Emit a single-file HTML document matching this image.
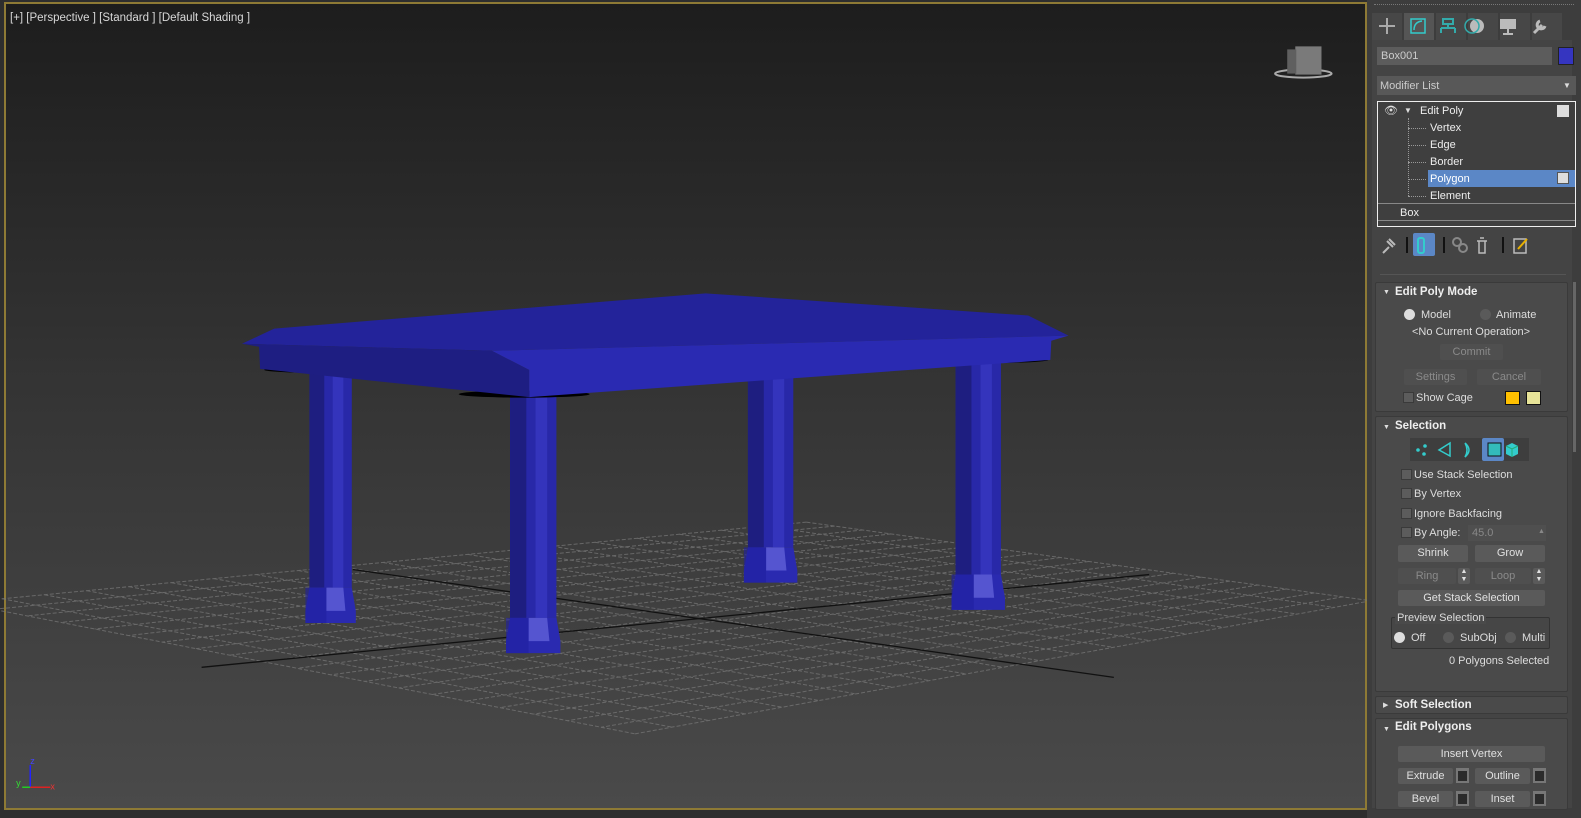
<!DOCTYPE html>
<html><head><meta charset="utf-8"><style>
*{box-sizing:border-box;margin:0;padding:0}
body{width:1581px;height:818px;background:#444;overflow:hidden;font-family:"Liberation Sans",sans-serif;font-size:11px;color:#ddd;position:relative}
.a{position:absolute}
.t{position:absolute;white-space:nowrap;line-height:12px}
.btn{position:absolute;background:#5a5a5a;border-radius:2px;text-align:center;line-height:16px;color:#e0e0e0}
.dis{color:#8a8a8a;background:#4f4f4f}
.cb{position:absolute;width:11px;height:11px;background:#5c5c5c;border:1px solid #3a3a3a}
.rad{position:absolute;width:11px;height:11px;border-radius:50%;background:#5a5a5a}
.ro{position:absolute;left:1375px;width:193px;background:#4a4a4a;border:1px solid #3a3a3a;border-radius:2px}
.ttl{position:absolute;font-weight:bold;font-size:11.5px;color:#eee}
.sq{position:absolute;width:13px;height:15px;background:#2b2b2b;border:2px solid #777;border-top-width:3px}
</style></head><body>
<svg class="a" style="left:0;top:0" width="1368" height="818" viewBox="0 0 1368 818">
<defs><linearGradient id="bg" x1="0" y1="0" x2="0" y2="1"><stop offset="0" stop-color="#1d1d1d"/><stop offset="0.45" stop-color="#333"/><stop offset="1" stop-color="#4a4a4a"/></linearGradient></defs>
<rect width="1368" height="818" fill="#2e2e2e"/>
<rect x="5" y="3" width="1361" height="806" fill="url(#bg)" stroke="#8e7a35" stroke-width="2"/>
<text x="10" y="21" fill="#d8d8d8" font-size="11.5" font-family="Liberation Sans">[+] [Perspective ] [Standard ] [Default Shading ]</text>
<g transform="scale(1.008)">
<g id="grid" stroke="#7a7a7a" stroke-width="1" stroke-dasharray="4 2" opacity="0.7"></g>
<line x1="200" y1="662" x2="1140" y2="570" stroke="#111" stroke-width="1.3"/>
<line x1="350" y1="565" x2="1105" y2="672" stroke="#111" stroke-width="1.3"/>
<g id="legs"></g>
<ellipse cx="330" cy="367" rx="68" ry="3" fill="#000"/>
<ellipse cx="520" cy="391" rx="65" ry="3.5" fill="#000"/>
<ellipse cx="990" cy="357" rx="50" ry="3" fill="#000"/>
<polygon points="240,341 272,326 700,291 1020,313 1060,333 488,348" fill="#23239a"/>
<polygon points="240,341 488,348 525,367 525,394 258,366 257,344" fill="#1e1e82"/>
<polygon points="488,348 1060,333 1043,338 1042,357 525,394 525,367" fill="#2a2ab2"/>
<ellipse cx="1293" cy="73" rx="28" ry="4" fill="none" stroke="#aaa" stroke-width="2"/>
<rect x="1285" y="46" width="26" height="28" fill="#7a7a7a"/>
<rect x="1277" y="49" width="9" height="24" fill="#5f5f5f"/>
<line x1="30" y1="759" x2="30" y2="781" stroke="#22f" stroke-width="1.5"/>
<line x1="30" y1="781" x2="50" y2="781" stroke="#d22" stroke-width="1.5"/>
<line x1="22" y1="781" x2="30" y2="781" stroke="#2c2" stroke-width="1.5"/>
<text x="30" y="758" fill="#44f" font-size="9">z</text><text x="50" y="783" fill="#e33" font-size="9">x</text><text x="16" y="780" fill="#3d3" font-size="9">y</text>
</g>
</svg>
<div class="a" style="left:1367px;top:0;width:214px;height:818px;background:#3d3d3d"></div>
<div class="a" style="left:1372px;top:40px;width:200px;height:768px;background:#444"></div>
<div class="a" style="left:1374px;top:4px;width:200px;height:2px;border-top:1px dotted #777"></div>
<div class="a" style="left:1372px;top:13px;width:30px;height:27px;background:#474747"></div>
<div class="a" style="left:1404px;top:13px;width:30px;height:27px;background:#555"></div>
<div class="a" style="left:1436px;top:13px;width:30px;height:27px;background:#474747"></div>
<div class="a" style="left:1468px;top:13px;width:30px;height:27px;background:#474747"></div>
<div class="a" style="left:1500px;top:13px;width:30px;height:27px;background:#474747"></div>
<div class="a" style="left:1532px;top:13px;width:30px;height:27px;background:#474747"></div>
<svg class="a" style="left:1372px;top:13px" width="192" height="27">
<path d="M15 5v16M7 13h16" stroke="#aaa" stroke-width="2"/>
<rect x="39" y="6" width="14" height="14" fill="none" stroke="#3cc" stroke-width="1.5"/><path d="M42 17q0-8 8-9" stroke="#3cc" fill="none" stroke-width="1.5"/>
<path d="M71 6h10v5h-10zM76 11v4M69 15h14M69 15v5M83 15v5" stroke="#3aa" fill="none" stroke-width="2"/>
<circle cx="105" cy="13" r="7" fill="#bbb"/><circle cx="100" cy="13" r="7" fill="none" stroke="#3aa" stroke-width="1.5"/>
<rect x="128" y="6" width="16" height="10" fill="#bbb"/><path d="M136 16v4M131 21h10" stroke="#bbb" stroke-width="2"/>
<path d="M162 20l8-8M168 8a4 4 0 1 0 5 5" stroke="#bbb" stroke-width="3" fill="none"/>
</svg>
<div class="a" style="left:1377px;top:47px;width:175px;height:18px;background:#5c5c5c"></div><div class="t" style="left:1381px;top:50px;color:#ccc">Box001</div>
<div class="a" style="left:1558px;top:47px;width:16px;height:18px;background:#3535c0;border:1px solid #222"></div>
<div class="a" style="left:1377px;top:76px;width:199px;height:19px;background:#585858"></div><div class="t" style="left:1380px;top:80px;color:#ccc">Modifier List</div><div class="t" style="left:1563px;top:80px;font-size:8px">▼</div>
<div class="a" style="left:1377px;top:101px;width:199px;height:126px;background:#3f3f3f;border:1px solid #eee"></div>
<div class="a" style="left:1428px;top:170px;width:147px;height:17px;background:#5b87c6"></div>
<div class="a" style="left:1408px;top:118px;width:1px;height:78px;border-left:1px dotted #999"></div>
<div class="a" style="left:1408px;top:128px;width:18px;border-top:1px dotted #999"></div>
<div class="a" style="left:1408px;top:145px;width:18px;border-top:1px dotted #999"></div>
<div class="a" style="left:1408px;top:162px;width:18px;border-top:1px dotted #999"></div>
<div class="a" style="left:1408px;top:179px;width:18px;border-top:1px dotted #999"></div>
<div class="a" style="left:1408px;top:196px;width:18px;border-top:1px dotted #999"></div>
<div class="t" style="left:1384px;top:105px;color:#ddd">👁</div><div class="t" style="left:1404px;top:105px;font-size:8px">▼</div>
<div class="t" style="left:1420px;top:105px;color:#eee">Edit Poly</div>
<div class="t" style="left:1430px;top:122px;color:#eee">Vertex</div>
<div class="t" style="left:1430px;top:139px;color:#eee">Edge</div>
<div class="t" style="left:1430px;top:156px;color:#eee">Border</div>
<div class="t" style="left:1430px;top:173px;color:#fff">Polygon</div>
<div class="t" style="left:1430px;top:190px;color:#eee">Element</div>
<div class="a" style="left:1378px;top:203px;width:197px;height:1px;background:#888"></div>
<div class="t" style="left:1400px;top:207px;color:#eee">Box</div>
<div class="a" style="left:1378px;top:220px;width:197px;height:1px;background:#888"></div>
<div class="a" style="left:1557px;top:105px;width:12px;height:12px;background:#ddd"></div>
<div class="a" style="left:1557px;top:172px;width:12px;height:12px;background:#ddd;border:1px solid #555"></div>
<div class="a" style="left:1413px;top:233px;width:22px;height:23px;background:#5b87c6;border-radius:2px"></div>
<svg class="a" style="left:1380px;top:233px" width="160" height="24">
<path d="M3 20l6-6M7 8l6 6M9 6l6 6" stroke="#bbb" stroke-width="2"/>
<line x1="27" y1="4" x2="27" y2="20" stroke="#111" stroke-width="2"/>
<rect x="38" y="5" width="6" height="15" rx="2" fill="none" stroke="#3cc" stroke-width="2"/>
<line x1="64" y1="4" x2="64" y2="20" stroke="#111" stroke-width="2"/>
<circle cx="77" cy="9" r="4" fill="none" stroke="#888" stroke-width="2"/><circle cx="83" cy="15" r="4" fill="none" stroke="#888" stroke-width="2"/>
<path d="M97 8h10M99 8v12h6v-12M100 5h4" stroke="#bbb" stroke-width="1.5" fill="none"/>
<line x1="123" y1="4" x2="123" y2="20" stroke="#111" stroke-width="2"/>
<rect x="134" y="6" width="12" height="14" fill="none" stroke="#bbb" stroke-width="1.5"/><path d="M138 16l9-10" stroke="#e8b000" stroke-width="2"/>
</svg>
<div class="a" style="left:1380px;top:274px;width:186px;height:1px;background:#555"></div>
<div class="ro" style="top:282px;height:130px"></div>
<div class="t" style="left:1383px;top:287px;font-size:7px">▼</div><div class="ttl" style="left:1395px;top:286px">Edit Poly Mode</div>
<div class="rad" style="left:1404px;top:309px;background:#ddd"></div><div class="t" style="left:1421px;top:309px">Model</div>
<div class="rad" style="left:1480px;top:309px"></div><div class="t" style="left:1496px;top:309px">Animate</div>
<div class="t" style="left:1412px;top:326px">&lt;No Current Operation&gt;</div>
<div class="btn dis" style="left:1440px;top:344px;width:63px;height:16px">Commit</div>
<div class="btn dis" style="left:1404px;top:369px;width:63px;height:16px">Settings</div>
<div class="btn dis" style="left:1477px;top:369px;width:64px;height:16px">Cancel</div>
<div class="cb" style="left:1403px;top:392px"></div><div class="t" style="left:1416px;top:392px">Show Cage</div>
<div class="a" style="left:1505px;top:391px;width:15px;height:14px;background:#ffc000;border:1px solid #111"></div>
<div class="a" style="left:1526px;top:391px;width:15px;height:14px;background:#e8e498;border:1px solid #111"></div>
<div class="ro" style="top:416px;height:276px"></div>
<div class="t" style="left:1383px;top:422px;font-size:7px">▼</div><div class="ttl" style="left:1395px;top:420px">Selection</div>
<div class="a" style="left:1410px;top:438px;width:119px;height:23px;background:#3e3e3e"></div>
<div class="a" style="left:1482px;top:438px;width:22px;height:23px;background:#5b87c6;border-radius:2px"></div>
<svg class="a" style="left:1410px;top:438px" width="120" height="23">
<circle cx="8" cy="12" r="1.8" fill="#3cc"/><circle cx="15" cy="8" r="1.8" fill="#3cc"/><circle cx="14" cy="16" r="1.8" fill="#3cc"/>
<path d="M40 5l-11 7 11 6z" fill="none" stroke="#3cc" stroke-width="1.5"/>
<path d="M55 5q8 7 0 14q4-7 0-14" fill="none" stroke="#3cc" stroke-width="1.5"/>
<rect x="78" y="5" width="13" height="13" fill="#3bb" stroke="#111"/>
<path d="M96 8l6-3 6 3v8l-6 3-6-3z" fill="#3cc"/><path d="M96 8l6 3 6-3M102 11v8" stroke="#2a7" fill="none"/>
</svg>
<div class="cb" style="left:1401px;top:469px"></div><div class="t" style="left:1414px;top:469px">Use Stack Selection</div>
<div class="cb" style="left:1401px;top:488px"></div><div class="t" style="left:1414px;top:488px">By Vertex</div>
<div class="cb" style="left:1401px;top:508px"></div><div class="t" style="left:1414px;top:508px">Ignore Backfacing</div>
<div class="cb" style="left:1401px;top:527px"></div><div class="t" style="left:1414px;top:527px">By Angle:</div>
<div class="a" style="left:1468px;top:525px;width:78px;height:16px;background:#4f4f4f"></div><div class="t" style="left:1472px;top:527px;color:#888">45.0</div><div class="t" style="left:1538px;top:526px;font-size:7px;color:#888">▲</div>
<div class="btn" style="left:1398px;top:545px;width:70px;height:17px">Shrink</div>
<div class="btn" style="left:1475px;top:545px;width:70px;height:17px">Grow</div>
<div class="btn dis" style="left:1398px;top:568px;width:58px;height:16px">Ring</div>
<div class="btn" style="left:1458px;top:568px;width:12px;height:16px;font-size:7px;line-height:8px">▲<br>▼</div>
<div class="btn dis" style="left:1475px;top:568px;width:56px;height:16px">Loop</div>
<div class="btn" style="left:1533px;top:568px;width:12px;height:16px;font-size:7px;line-height:8px">▲<br>▼</div>
<div class="btn" style="left:1398px;top:590px;width:147px;height:16px">Get Stack Selection</div>
<div class="a" style="left:1391px;top:617px;width:159px;height:32px;border:1px solid #333;border-radius:2px;background:#464646"></div>
<div class="t" style="left:1395px;top:612px;background:#4a4a4a;padding:0 2px">Preview Selection</div>
<div class="rad" style="left:1394px;top:632px;background:#ddd"></div><div class="t" style="left:1411px;top:632px">Off</div>
<div class="rad" style="left:1443px;top:632px"></div><div class="t" style="left:1460px;top:632px">SubObj</div>
<div class="rad" style="left:1505px;top:632px"></div><div class="t" style="left:1522px;top:632px">Multi</div>
<div class="t" style="left:1449px;top:655px">0 Polygons Selected</div>
<div class="ro" style="top:696px;height:18px"></div>
<div class="t" style="left:1383px;top:700px;font-size:7px">▶</div><div class="ttl" style="left:1395px;top:699px">Soft Selection</div>
<div class="ro" style="top:718px;height:92px"></div>
<div class="t" style="left:1383px;top:724px;font-size:7px">▼</div><div class="ttl" style="left:1395px;top:721px">Edit Polygons</div>
<div class="btn" style="left:1398px;top:746px;width:147px;height:16px">Insert Vertex</div>
<div class="btn" style="left:1398px;top:768px;width:55px;height:16px">Extrude</div><div class="sq" style="left:1456px;top:768px"></div>
<div class="btn" style="left:1475px;top:768px;width:55px;height:16px">Outline</div><div class="sq" style="left:1533px;top:768px"></div>
<div class="btn" style="left:1398px;top:791px;width:55px;height:16px">Bevel</div><div class="sq" style="left:1456px;top:791px"></div>
<div class="btn" style="left:1475px;top:791px;width:55px;height:16px">Inset</div><div class="sq" style="left:1533px;top:791px"></div>
<div class="a" style="left:1573px;top:282px;width:3px;height:170px;background:#666"></div>
<div class="a" style="left:1367px;top:810px;width:214px;height:8px;background:#3d3d3d"></div>
<script>
var ns="http://www.w3.org/2000/svg";
var g=document.getElementById("grid");
function L(a,b){var l=document.createElementNS(ns,"line");l.setAttribute("x1",a[0]);l.setAttribute("y1",a[1]);l.setAttribute("x2",b[0]);l.setAttribute("y2",b[1]);g.appendChild(l);}
function lerp(p,q,t){return[p[0]+(q[0]-p[0])*t,p[1]+(q[1]-p[1])*t];}
var B=[800,518],Lf=[-40,598],F=[630,728],R=[1360,596];
var n=20;
for(var i=0;i<=n;i++){var t=i/n;L(lerp(Lf,B,t),lerp(F,R,t));L(lerp(B,R,t),lerp(Lf,F,t));}
var lg=document.getElementById("legs");
function leg(x,top,w,bot){
 var s='';
 s+='<rect x="'+x+'" y="'+top+'" width="'+w+'" height="'+(bot-top-35)+'" fill="#2828a8"/>';
 s+='<rect x="'+x+'" y="'+top+'" width="'+(w*0.35)+'" height="'+(bot-top-35)+'" fill="#1e1e80"/>';
 s+='<rect x="'+(x+w*0.55)+'" y="'+top+'" width="'+(w*0.25)+'" height="'+(bot-top-35)+'" fill="#3434bc"/>';
 s+='<polygon points="'+x+','+(bot-35)+' '+(x+w)+','+(bot-35)+' '+(x+w+4)+','+(bot-12)+' '+(x+w+4)+','+bot+' '+(x-4)+','+bot+' '+(x-4)+','+(bot-12)+'" fill="#2a2ab0"/>';
 s+='<polygon points="'+(x+w*0.4)+','+(bot-35)+' '+(x+w*0.8)+','+(bot-35)+' '+(x+w*0.85)+','+(bot-12)+' '+(x+w*0.4)+','+(bot-12)+'" fill="#5555d0"/>';
 s+='<polygon points="'+(x-4)+','+(bot-35)+' '+(x+w*0.4)+','+(bot-35)+' '+(x+w*0.4)+','+bot+' '+(x-4)+','+bot+'" fill="#2020a0" opacity="0.6"/>';
 return s;}
lg.innerHTML=leg(742,370,45,578)+leg(948,360,45,605)+leg(307,368,42,618)+leg(506,390,46,648);
</script>
</body></html>
